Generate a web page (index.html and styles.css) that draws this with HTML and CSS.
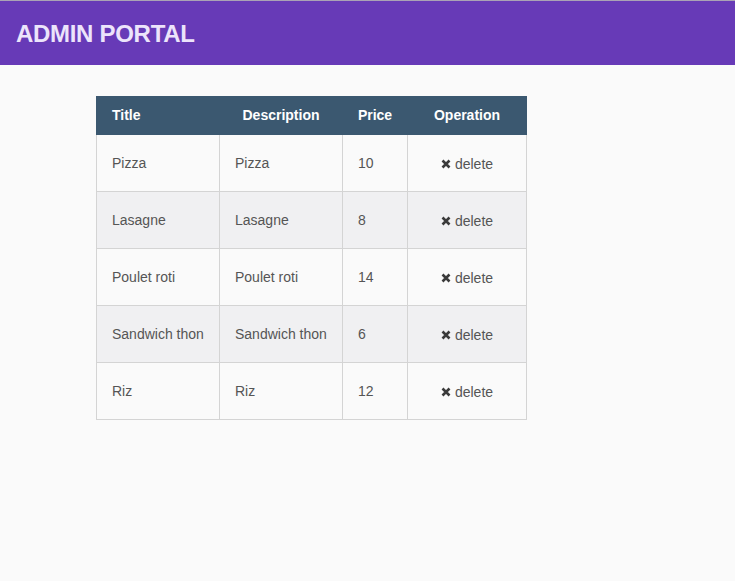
FILE: index.html
```html
<!DOCTYPE html>
<html>
<head>
<meta charset="utf-8">
<link rel="stylesheet" href="styles.css">
</head>
<body>
<header class="topbar"><h1 class="brand">ADMIN PORTAL</h1></header>
<main class="content">
<table class="grid">
<colgroup><col class="c1"><col class="c2"><col class="c3"><col class="c4"></colgroup>
<thead><tr><th class="left">Title</th><th>Description</th><th>Price</th><th>Operation</th></tr></thead>
<tbody>
<tr><td>Pizza</td><td>Pizza</td><td>10</td><td class="op"><span class="del"><svg class="x" viewBox="0 0 10 10"><path d="M1.5 1.5L8.5 8.5M8.5 1.5L1.5 8.5"/></svg>delete</span></td></tr>
<tr><td>Lasagne</td><td>Lasagne</td><td>8</td><td class="op"><span class="del"><svg class="x" viewBox="0 0 10 10"><path d="M1.5 1.5L8.5 8.5M8.5 1.5L1.5 8.5"/></svg>delete</span></td></tr>
<tr><td>Poulet roti</td><td>Poulet roti</td><td>14</td><td class="op"><span class="del"><svg class="x" viewBox="0 0 10 10"><path d="M1.5 1.5L8.5 8.5M8.5 1.5L1.5 8.5"/></svg>delete</span></td></tr>
<tr><td>Sandwich thon</td><td>Sandwich thon</td><td>6</td><td class="op"><span class="del"><svg class="x" viewBox="0 0 10 10"><path d="M1.5 1.5L8.5 8.5M8.5 1.5L1.5 8.5"/></svg>delete</span></td></tr>
<tr><td>Riz</td><td>Riz</td><td>12</td><td class="op"><span class="del"><svg class="x" viewBox="0 0 10 10"><path d="M1.5 1.5L8.5 8.5M8.5 1.5L1.5 8.5"/></svg>delete</span></td></tr>
</tbody>
</table>
</main>
</body>
</html>
```
FILE: styles.css
```css
html, body { margin: 0; padding: 0; }
body {
  background: #fafafa;
  font-family: "Liberation Sans", Arial, sans-serif;
  color: #555;
  height: 581px;
}
.topbar {
  background: #673ab7;
  border-top: 1px solid #aaa3b5;
  height: 64px;
  display: flex;
  align-items: center;
  padding-left: 16px;
}
.brand {
  margin: 0;
  font-size: 24px;
  font-weight: bold;
  color: #ece4fb;
  letter-spacing: -0.3px;
  padding-top: 1px;
}
.content { padding: 31px 0 0 96px; }
.grid {
  border-collapse: collapse;
  table-layout: fixed;
  width: 430px;
  font-size: 14px;
}
.c1 { width: 123px; }
.c2 { width: 123px; }
.c3 { width: 65px; }
.c4 { width: 119px; }
.grid th {
  background: #3b5870;
  color: #fff;
  font-weight: bold;
  height: 36px;
  padding: 0 0 1px 0;
  text-align: center;
  border: 1px solid #3b5870;
}
.grid th.left { text-align: left; padding-left: 15px; }
.grid td {
  height: 55px;
  padding: 0 0 1px 15px;
  border: 1px solid #d4d4d4;
  text-align: left;
  color: #555;
}
.grid tbody tr:nth-child(odd) td { background: #fafafa; }
.grid tbody tr:nth-child(even) td { background: #f0f0f2; }
.grid td.op { text-align: center; padding-left: 0; }
.del { display: inline-flex; align-items: center; gap: 4px; color: #555; padding-top: 2px; }
.x { width: 10px; height: 10px; stroke: #3a3a3a; stroke-width: 2.6; stroke-linecap: butt; fill: none; }
```
